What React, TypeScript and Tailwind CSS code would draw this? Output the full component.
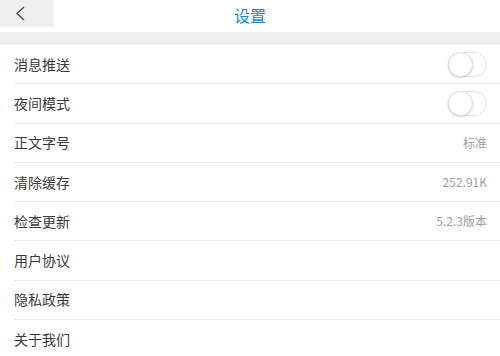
import React from "react";

const font = { fontFamily: '"Noto Sans CJK SC", "Noto Sans", sans-serif' };

function Toggle() {
  return (
    <div className="relative h-[25px] w-[39px] rounded-full border border-[#e6e6e6] bg-white">
      <div className="absolute left-[-1px] top-[-1px] h-[25px] w-[25px] rounded-full border border-[#e0e0e0] bg-white shadow-[0_1px_2px_rgba(0,0,0,0.18)]" />
    </div>
  );
}

type Row = { label: string; right?: React.ReactNode };

const rows: Row[] = [
  { label: "消息推送", right: <Toggle /> },
  { label: "夜间模式", right: <Toggle /> },
  { label: "正文字号", right: "标准" },
  { label: "清除缓存", right: "252.91K" },
  { label: "检查更新", right: "5.2.3版本" },
  { label: "用户协议" },
  { label: "隐私政策" },
  { label: "关于我们" },
];

export default function App() {
  return (
    <div className="h-[356px] w-[500px] overflow-hidden bg-white" style={font}>
      <div className="relative flex h-[32px] items-start">
        <div className="flex h-[27px] w-[54px] items-center bg-[#efefef] pl-[15px]">
          <svg width="11" height="15" viewBox="0 0 11 15" fill="none">
            <path d="M9 1 L2 7.5 L9 14" stroke="#444" strokeWidth="1.3" />
          </svg>
        </div>
        <div className="absolute left-0 right-0 top-[3px] text-center text-[16px] leading-[24px] text-[#1c8ad6]">
          设置
        </div>
      </div>
      <div className="h-[13px] bg-[#efefef]" />
      <div className="pl-[14px]">
        {rows.map((r, i) => (
          <div
            key={r.label}
            className={`flex h-[39.3px] items-center justify-between pr-[13px] ${
              i < rows.length - 1 ? "border-b border-[#ececec]" : ""
            }`}
          >
            <span className="text-[14px] text-[#3a3a3a]">{r.label}</span>
            {typeof r.right === "string" ? (
              <span className="text-[12px] text-[#a0a0a0]">{r.right}</span>
            ) : (
              r.right
            )}
          </div>
        ))}
      </div>
    </div>
  );
}
